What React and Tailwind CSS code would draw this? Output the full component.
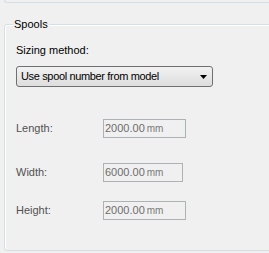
const font = { fontFamily: '"Liberation Sans", Arial, sans-serif' };

const Field = ({ label, value, width }) => (
  <div className="flex items-center">
    <span className="w-[87px] text-[#505050]">{label}</span>
    <div
      className={`${width} h-[19px] flex items-center pl-[1px] border border-[#adb2b5] bg-[#f0f0f0]`}
    >
      <span className="text-[#6d6d6d]">{value}</span>
      <span className="ml-[2px] text-[10px] text-[#7a7a7a]">mm</span>
    </div>
  </div>
);

export default function App() {
  return (
    <div
      className="w-[269px] h-[253px] overflow-hidden bg-[#f0f0f0] text-[11px] leading-[13px] text-black"
      style={font}
    >
      {/* bottom edge of the panel above */}
      <div className="ml-[4px] h-[3px] border-l border-b border-[#d5dfe5] rounded-bl-[3px]" />

      {/* Spools group */}
      <div className="relative ml-[4px] mt-[21px] w-[290px] h-[227px] border border-[#d5dfe5] rounded-[3px] shadow-[inset_1px_1px_0_#ffffff] pl-[11px] pt-[19px]">
        <span className="absolute left-[8px] top-[-7px] px-[1px] bg-[#f0f0f0] text-[#000]">
          Spools
        </span>

        <div>Sizing method:</div>

        <div className="mt-[9px] w-[197px] h-[21px] flex items-center justify-between pl-[4px] pr-[5px] border border-[#707070] rounded-[3px] bg-gradient-to-b from-[#f2f2f2] to-[#dddddd]">
          <span className="tracking-[-0.35px]">Use spool number from model</span>
          <svg width="7" height="4" viewBox="0 0 7 4">
            <path d="M0 0H7L3.5 4Z" fill="#000" />
          </svg>
        </div>

        <div className="mt-[32px]">
          <Field label="Length:" value="2000.00" width="w-[83px]" />
        </div>
        <div className="mt-[25px]">
          <Field label="Width:" value="6000.00" width="w-[80px]" />
        </div>
        <div className="mt-[19px]">
          <Field label="Height:" value="2000.00" width="w-[83px]" />
        </div>
      </div>
    </div>
  );
}
